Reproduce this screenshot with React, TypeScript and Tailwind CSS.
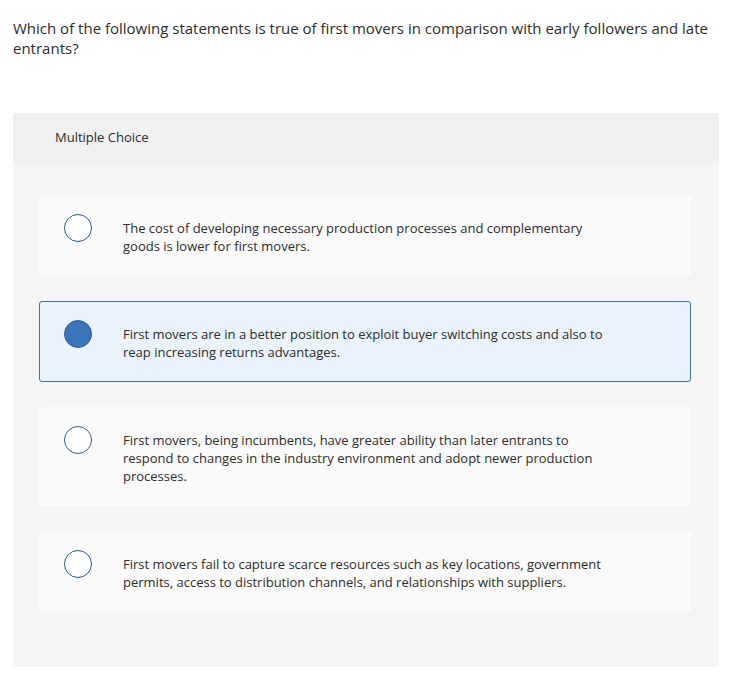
const options = [
  'The cost of developing necessary production processes and complementary goods is lower for first movers.',
  'First movers are in a better position to exploit buyer switching costs and also to reap increasing returns advantages.',
  'First movers, being incumbents, have greater ability than later entrants to respond to changes in the industry environment and adopt newer production processes.',
  'First movers fail to capture scarce resources such as key locations, government permits, access to distribution channels, and relationships with suppliers.',
]

const selected = 1

export default function App() {
  return (
    <div className="min-h-[688px] bg-white px-[13px] pt-[18px] text-[#2d2d2d] [font-family:'Open_Sans','Liberation_Sans',sans-serif]">
      <p className="w-[700px] text-[15px] leading-[20px]">
        Which of the following statements is true of first movers in comparison with early followers and late entrants?
      </p>

      <div className="mt-[55px] w-[706px] overflow-hidden rounded-[2px] bg-[#f5f5f5]">
        <div className="flex h-[50px] items-center bg-[#f0f0f0] pl-[42px] text-[13px]">Multiple Choice</div>

        <div className="flex flex-col gap-[25px] pb-[55px] pl-[26px] pr-[28px] pt-[32px]">
          {options.map((text, i) => {
            const active = i === selected
            return (
              <div
                key={i}
                className={
                  active
                    ? 'flex items-start rounded-[3px] border border-[#3b73b3] bg-[#eaf2fb] pb-[20px] pl-[24px] pt-[23px]'
                    : 'flex items-start rounded-[3px] border border-transparent bg-[#fafafa] pb-[20px] pl-[24px] pt-[23px]'
                }
              >
                <span
                  className={
                    active
                      ? '-mt-[5px] h-[28px] w-[28px] shrink-0 rounded-full border-[1.5px] border-[#2c5f9a] bg-[#3a75b9]'
                      : '-mt-[5px] h-[28px] w-[28px] shrink-0 rounded-full border-[1.5px] border-[#2c5a8c] bg-white'
                  }
                />
                <p className="ml-[31px] w-[490px] text-[13px] leading-[18px]">{text}</p>
              </div>
            )
          })}
        </div>
      </div>
    </div>
  )
}
